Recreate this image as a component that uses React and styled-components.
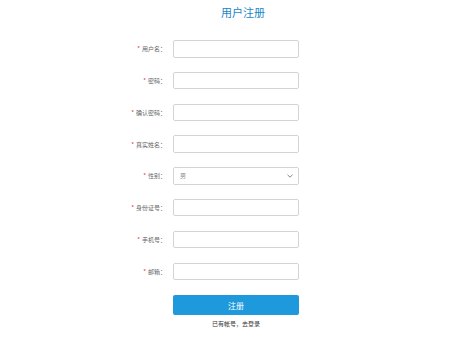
import styled, { createGlobalStyle } from 'styled-components';

const GlobalStyle = createGlobalStyle`
  html, body {
    margin: 0;
    padding: 0;
    background: #ffffff;
  }
  body {
    font-family: "Noto Sans CJK SC", "Liberation Sans", sans-serif;
  }
`;

const Page = styled.div`
  width: 474px;
  height: 342px;
  display: flex;
  flex-direction: column;
  overflow: hidden;
`;

const Title = styled.h2`
  margin: 4px 0 0;
  padding-left: 12px;
  align-self: center;
  font-size: 11px;
  font-weight: normal;
  line-height: 16px;
  color: #1c86c6;
`;

const Form = styled.form`
  margin: 20px 0 0 110px;
  display: flex;
  flex-direction: column;
  gap: 14.3px;
`;

const Row = styled.div`
  display: flex;
  align-items: center;
  gap: 7px;
`;

const Label = styled.label`
  width: 56px;
  text-align: right;
  font-size: 6px;
  color: #666;
  white-space: nowrap;
`;

const Star = styled.span`
  color: #e23d3d;
  margin-right: 2px;
`;

const Input = styled.input`
  box-sizing: border-box;
  width: 126px;
  height: 17.5px;
  border: 1px solid #d4d4d4;
  border-radius: 2px;
  background: #fff;
  outline: none;
  padding: 0 6px;
  font-size: 6px;
`;

const SelectBox = styled.div`
  box-sizing: border-box;
  width: 126px;
  height: 17.5px;
  border: 1px solid #d4d4d4;
  border-radius: 2px;
  display: flex;
  align-items: center;
  justify-content: space-between;
  padding: 0 5px 0 6px;
  font-size: 6px;
  color: #888;
`;

const Footer = styled.div`
  margin: 15px 0 0 173px;
  width: 126px;
  display: flex;
  flex-direction: column;
  align-items: center;
  gap: 4px;
`;

const Button = styled.button`
  width: 126px;
  height: 20px;
  border: none;
  border-radius: 2px;
  background: #1d99dc;
  color: #fff;
  font-size: 8px;
  font-family: inherit;
  cursor: pointer;
`;

const LoginLink = styled.a`
  font-size: 6px;
  color: #333;
  text-decoration: none;
`;

const fields = ['用户名', '密码', '确认密码', '真实姓名', '性别', '身份证号', '手机号', '邮箱'];

export default function App() {
  return (
    <Page>
      <GlobalStyle />
      <Title>用户注册</Title>
      <Form>
        {fields.map((f) => (
          <Row key={f}>
            <Label>
              <Star>*</Star>
              {f}：
            </Label>
            {f === '性别' ? (
              <SelectBox>
                <span>男</span>
                <svg width="6" height="4" viewBox="0 0 6 4">
                  <path d="M0.5 0.8 L3 3.2 L5.5 0.8" fill="none" stroke="#666" strokeWidth="0.8" />
                </svg>
              </SelectBox>
            ) : (
              <Input type={f.includes('密码') ? 'password' : 'text'} />
            )}
          </Row>
        ))}
      </Form>
      <Footer>
        <Button type="button">注册</Button>
        <LoginLink>已有帐号，去登录</LoginLink>
      </Footer>
    </Page>
  );
}
